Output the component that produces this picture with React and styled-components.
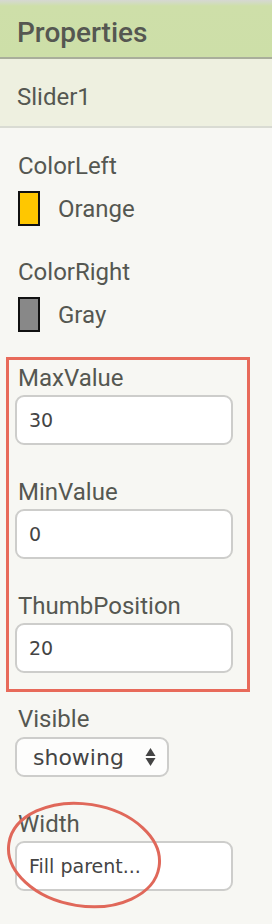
import React from 'react';
import styled, { createGlobalStyle } from 'styled-components';

const GlobalStyle = createGlobalStyle`
  html, body {
    margin: 0;
    padding: 0;
    background: #f7f7f3;
  }
  body {
    font-family: Roboto, "Liberation Sans", sans-serif;
  }
`;

const Panel = styled.div`
  width: 272px;
  height: 924px;
  overflow: hidden;
  background: #f7f7f3;
  display: flex;
  flex-direction: column;
`;

const Header = styled.div`
  box-sizing: border-box;
  height: 62px;
  padding: 18px 0 0 17px;
  background: linear-gradient(to bottom, #d6d8d2 0px, #d2dcc0 3px, #cedfa9 6px, #cddfa8 100%);
  border-bottom: 2px solid #a9ae9b;
  font-size: 28px;
  font-weight: 500;
  line-height: 30px;
  color: #555751;
`;

const ComponentName = styled.div`
  box-sizing: border-box;
  height: 72px;
  padding: 23px 0 0 17px;
  background: #eef0e0;
  border-bottom: 2px solid #d9dbd3;
  font-size: 24px;
  line-height: 30px;
  color: #555751;
`;

const Body = styled.div`
  display: flex;
  flex-direction: column;
  align-items: flex-start;
  padding: 24px 15px 0 15px;
`;

const Property = styled.div`
  position: relative;
  display: flex;
  flex-direction: column;
  align-items: flex-start;
  margin-bottom: ${(p) => (p.$last ? 0 : p.$gap || 33)}px;
`;

const Label = styled.div`
  margin-left: 3px;
  font-size: 24px;
  line-height: 28px;
  color: #555751;
`;

const ColorRow = styled.div`
  display: flex;
  align-items: center;
  gap: 18px;
  margin: 11px 0 0 3px;
  font-size: 24px;
  line-height: 28px;
  color: #555751;
`;

const Swatch = styled.div`
  box-sizing: border-box;
  width: 22px;
  height: 35px;
  border: 2px solid #111;
  background: ${(p) => p.$color};
`;

const TextBox = styled.div`
  box-sizing: border-box;
  width: 218px;
  height: 50px;
  margin-top: 3px;
  padding-left: 12px;
  display: flex;
  align-items: center;
  background: #fff;
  border: 2px solid #cdcdcb;
  border-radius: 9px;
  font-family: "DejaVu Sans", Verdana, sans-serif;
  font-size: 19px;
  color: #444;
`;

const Highlight = styled.div`
  box-sizing: border-box;
  width: 244px;
  margin: -7px 0 13px -9px;
  padding: 4px 0 16px 6px;
  border: 3px solid #e86a5a;
  display: flex;
  flex-direction: column;
  align-items: flex-start;
`;

const Select = styled.div`
  box-sizing: border-box;
  width: 154px;
  height: 40px;
  margin-top: 4px;
  padding: 0 11px 0 16px;
  display: flex;
  align-items: center;
  justify-content: space-between;
  background: #fdfdfc;
  border: 2px solid #cdcdcb;
  border-radius: 9px;
  font-family: "DejaVu Sans", Verdana, sans-serif;
  font-size: 22px;
  color: #444;
`;

const Ring = styled.svg`
  position: absolute;
  left: -15px;
  top: -9px;
  pointer-events: none;
`;

const Arrows = () => (
  <svg width="11" height="18" viewBox="0 0 11 18">
    <polygon points="5.5,0 10.5,8 0.5,8" fill="#444" />
    <polygon points="0.5,10 10.5,10 5.5,18" fill="#444" />
  </svg>
);

const colorProps = [
  { name: 'ColorLeft', value: 'Orange', color: '#ffc700' },
  { name: 'ColorRight', value: 'Gray', color: '#888888' },
];

const numberProps = [
  { name: 'MaxValue', value: '30' },
  { name: 'MinValue', value: '0' },
  { name: 'ThumbPosition', value: '20' },
];

export default function App() {
  return (
    <Panel>
      <GlobalStyle />
      <Header>Properties</Header>
      <ComponentName>Slider1</ComponentName>
      <Body>
        {colorProps.map((prop) => (
          <Property key={prop.name} $gap={32}>
            <Label>{prop.name}</Label>
            <ColorRow>
              <Swatch $color={prop.color} />
              {prop.value}
            </ColorRow>
          </Property>
        ))}
        <Highlight>
          {numberProps.map((prop, i) => (
            <Property key={prop.name} $last={i === numberProps.length - 1}>
              <Label>{prop.name}</Label>
              <TextBox>{prop.value}</TextBox>
            </Property>
          ))}
        </Highlight>
        <Property>
          <Label>Visible</Label>
          <Select>
            showing
            <Arrows />
          </Select>
        </Property>
        <Property>
          <Label>Width</Label>
          <TextBox>Fill parent...</TextBox>
          <Ring width="170" height="120" viewBox="0 0 170 120">
            <ellipse
              cx="84"
              cy="54"
              rx="76"
              ry="51"
              transform="rotate(9 84 54)"
              fill="none"
              stroke="#e0685a"
              strokeWidth="3"
            />
          </Ring>
        </Property>
      </Body>
    </Panel>
  );
}
